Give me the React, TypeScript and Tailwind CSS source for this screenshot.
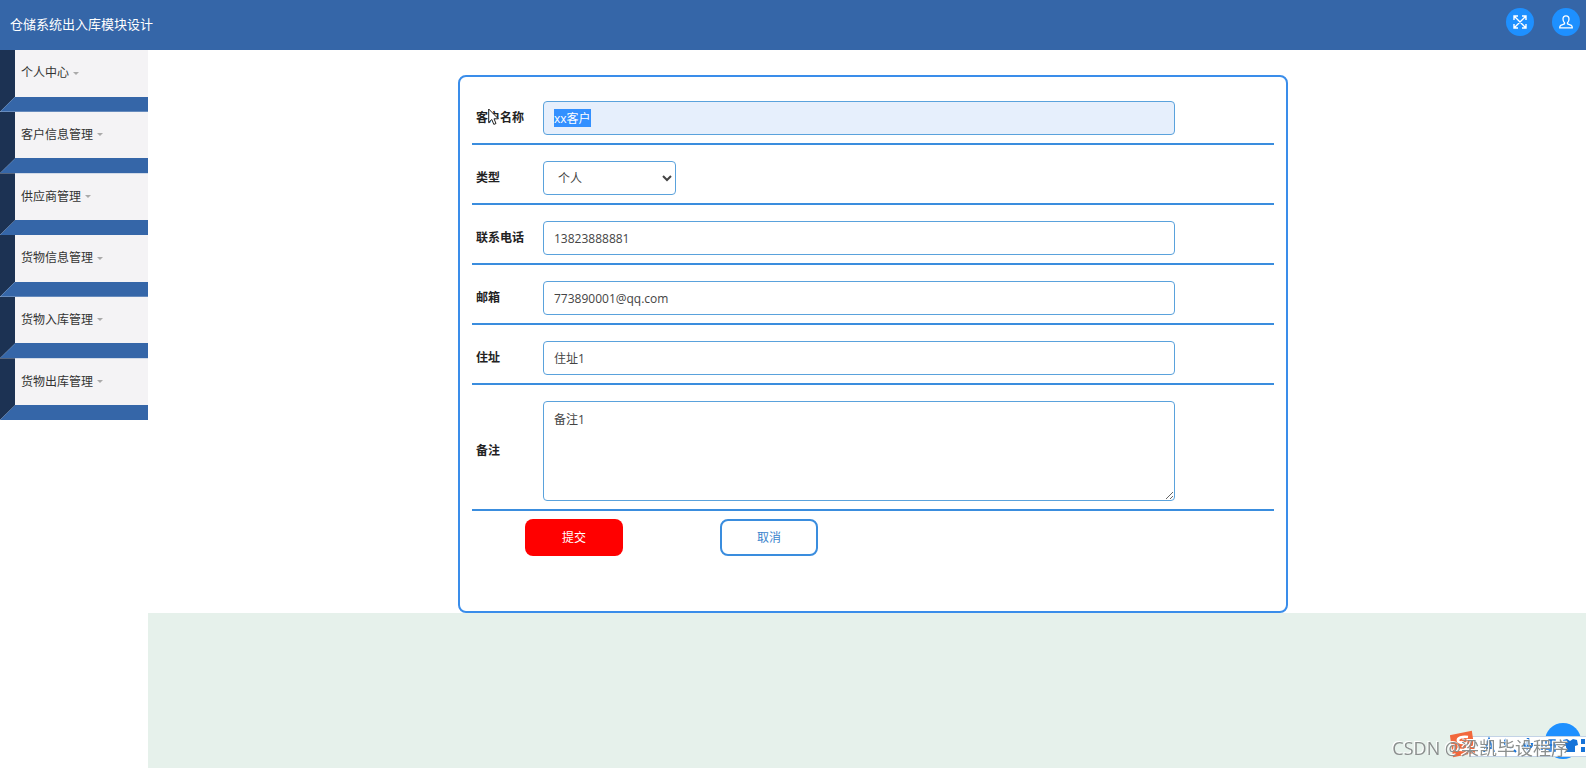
import { useEffect, useRef } from "react";

const menu = ["个人中心", "客户信息管理", "供应商管理", "货物信息管理", "货物入库管理", "货物出库管理"];

const rowClass = "flex items-center border-b-2 border-[#3a8dde] pt-4 pr-[99px] pb-2 pl-1";
const labelClass = "w-[67px] shrink-0 text-xs font-bold text-[#222]";
const fieldClass =
  "rounded border border-[#5aa2dc] px-2.5 text-xs text-[#444] outline-none selection:bg-[#3390ff] selection:text-white";

function Header() {
  return (
    <header className="flex h-[50px] items-center justify-between bg-[#3566a8] pr-1.5 pl-2.5">
      <h1 className="text-[13px] text-white">仓储系统出入库模块设计</h1>
      <div className="flex gap-[18px] pb-1.5">
        <button type="button" aria-label="全屏" className="flex size-7 items-center justify-center rounded-full bg-[#1e90ff]">
          <svg viewBox="0 0 14 14" className="size-3.5" fill="none" stroke="#fff" strokeWidth="1.4">
            <path d="M1.5 1.5l11 11M12.5 1.5l-11 11M1 5V1h4M9 1h4v4M13 9v4H9M5 13H1V9" />
          </svg>
        </button>
        <button type="button" aria-label="用户" className="flex size-7 items-center justify-center rounded-full bg-[#1e90ff]">
          <svg viewBox="0 0 14 14" className="size-3.5" fill="none" stroke="#fff" strokeWidth="1.3" strokeLinejoin="round">
            <path d="M7 .8C5 .8 4 2.200 4 4c0 1.700.5 2.900 1.500 3.700v1.200L1.700 10.400C1 10.800.7 11.500.7 12.900h12.600c0-1.400-.3-2.100-1-2.500L8.500 8.900V7.700C9.500 6.900 10 5.700 10 4 10 2.200 9 .8 7 .8z" />
          </svg>
        </button>
      </div>
    </header>
  );
}

function Sidebar() {
  return (
    <aside className="w-[148px] shrink-0 bg-white">
      <nav className="grid h-[370px] auto-rows-fr">
        {menu.map((name) => (
          <a key={name} href="#" className="flex text-xs text-[#333]">
            <span className="w-[15px] shrink-0 bg-[#1c3253] [clip-path:polygon(0_0,100%_0,100%_76%,0_100%)]" />
            <span className="-ml-[15px] flex grow flex-col bg-[#3566a8] [clip-path:polygon(15px_0,100%_0,100%_100%,0_100%,15px_76%)]">
              <span className="ml-[15px] flex grow items-center gap-1 bg-[#f4f3f5] pl-1.5">
                {name}
                <svg viewBox="0 0 6 3" className="h-[3px] w-1.5" fill="#aaa">
                  <path d="M0 0h6L3 3z" />
                </svg>
              </span>
              <span className="h-[15px]" />
            </span>
          </a>
        ))}
      </nav>
    </aside>
  );
}

function CustomerForm() {
  const nameRef = useRef<HTMLInputElement>(null);

  useEffect(() => {
    nameRef.current?.focus();
    nameRef.current?.select();
  }, []);

  return (
    <form
      onSubmit={(e) => e.preventDefault()}
      className="relative mr-[298px] ml-[310px] rounded-lg border-2 border-[#3a8dea] bg-white px-3 pt-2 pb-[55px]"
    >
      <div className={rowClass}>
        <label htmlFor="name" className={labelClass}>客户名称</label>
        <input id="name" ref={nameRef} defaultValue="xx客户" className={`${fieldClass} h-[34px] min-w-0 grow bg-[#e6effc]`} />
      </div>
      <div className={rowClass}>
        <label htmlFor="kind" className={labelClass}>类型</label>
        <select id="kind" className={`${fieldClass} h-[34px] w-[133px] bg-white`}>
          <option>个人</option>
          <option>企业</option>
        </select>
      </div>
      <div className={rowClass}>
        <label htmlFor="phone" className={labelClass}>联系电话</label>
        <input id="phone" type="tel" defaultValue="13823888881" className={`${fieldClass} h-[34px] min-w-0 grow`} />
      </div>
      <div className={rowClass}>
        <label htmlFor="email" className={labelClass}>邮箱</label>
        <input id="email" defaultValue="773890001@qq.com" className={`${fieldClass} h-[34px] min-w-0 grow`} />
      </div>
      <div className={rowClass}>
        <label htmlFor="address" className={labelClass}>住址</label>
        <input id="address" defaultValue="住址1" className={`${fieldClass} h-[34px] min-w-0 grow`} />
      </div>
      <div className={rowClass}>
        <label htmlFor="note" className={labelClass}>备注</label>
        <textarea id="note" defaultValue="备注1" className={`${fieldClass} h-[100px] min-w-0 grow resize py-2.5`} />
      </div>
      <div className="flex gap-[97px] pt-2 pl-[53px]">
        <button type="submit" className="h-[37px] w-[98px] rounded-lg bg-[#ff0000] text-xs text-white">提交</button>
        <button type="button" className="h-[37px] w-[98px] rounded-lg border-2 border-[#3a8dde] bg-white text-xs text-[#3a84cc]">取消</button>
      </div>
      <svg viewBox="0 0 12 18" className="pointer-events-none absolute top-[31px] left-[28px] h-[18px] w-3" fill="#fff" stroke="#222" strokeWidth="1">
        <path d="M.7 1v13.500l3.100-3 2 4.900 2.200-.9-2-4.700h4.300z" />
      </svg>
    </form>
  );
}

function Corner() {
  return (
    <div className="pointer-events-none fixed right-0 bottom-0 h-12 w-[210px] overflow-hidden">
      <div className="absolute top-[3px] right-[5px] size-9 rounded-full bg-[#1e90ff]" />
      <div className="absolute top-4 right-0 flex h-[21px] w-[116px] items-center border-y border-[#c3d3e6] bg-white" />
      <svg viewBox="0 0 136 28" className="absolute top-2.5 right-0 h-7 w-[136px]" fill="none" stroke="#1673d8" strokeWidth="2">
        <path d="M1 6l20-4 3 20-20 4z" fill="#f2683c" stroke="#f2683c" />
        <path d="M18 7C12 6 7 8 8 11s10 1 10 5-6 5-11 3" stroke="#fff" strokeWidth="2.500" />
        <path d="M34 22l5-13 5 13M36 18h6M56 9c-3 5 0 9 6 8M64 20l2 2" />
        <path d="M78 8v9M74 13c0 7 8 7 8 0M78 18v4" strokeWidth="2.500" />
        <path d="M92 10h13v11H92zM92 15h13M96 10v8M101 10v8M95 19h7" strokeWidth="1.500" />
        <path d="M113 10l4-1 3 2 3-2 4 1 1 5-3 1v6h-9v-6l-3-1z" fill="#1673d8" stroke="none" />
        <path d="M131 9h4v5h-4zM131 17h4v5h-4z" fill="#1673d8" stroke="none" />
      </svg>
      <p className="absolute top-4 right-[17px] text-lg leading-6 whitespace-nowrap text-[#8b8f8e] [text-shadow:-1px_-1px_0_#fff]">
        CSDN @梁凯毕设程序
      </p>
    </div>
  );
}

export default function App() {
  return (
    <div className="flex min-h-screen flex-col bg-white font-['Open_Sans','Noto_Sans_CJK_SC',sans-serif]">
      <Header />
      <div className="flex grow">
        <Sidebar />
        <main className="min-w-0 grow bg-[#e6f1eb]">
          <div className="bg-white pt-[25px]">
            <CustomerForm />
          </div>
        </main>
      </div>
      <Corner />
    </div>
  );
}
